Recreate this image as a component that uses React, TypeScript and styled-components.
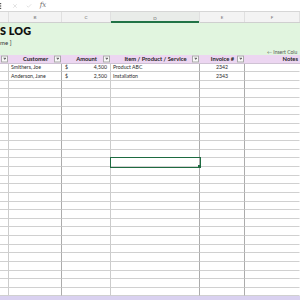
import React from 'react';
import styled, { createGlobalStyle } from 'styled-components';
import { X, Check } from 'lucide-react';

const GlobalStyle = createGlobalStyle`
  html, body {
    margin: 0;
    padding: 0;
    background: #fff;
  }
  body {
    width: 300px;
    height: 300px;
    overflow: hidden;
    font-family: Lato, "Liberation Sans", sans-serif;
  }
`;

const COLS = '9px 53px 49px 89px 45px 55px';
const LINE_SOFT = '#cccccc';
const LINE_STRONG = '#acacac';
const columnLines = [LINE_SOFT, LINE_STRONG, LINE_SOFT, LINE_STRONG, LINE_STRONG, 'transparent'];

const Sheet = styled.div`
  width: 300px;
  height: 300px;
  display: flex;
  flex-direction: column;
  overflow: hidden;
  background: #fff;
`;

const FormulaBar = styled.div`
  height: 12px;
  flex: none;
  box-sizing: border-box;
  display: flex;
  align-items: center;
  border-bottom: 1px solid #d6d6d6;
  background: #fff;
`;

const NameBoxEdge = styled.span`
  width: 8px;
  height: 100%;
  display: flex;
  align-items: center;
`;

const ToolSlot = styled.span`
  width: 14px;
  display: flex;
  align-items: center;
  justify-content: center;
  color: #b9b9b9;
`;

const Fx = styled.span`
  font-family: "DejaVu Serif", "Liberation Serif", serif;
  font-style: italic;
  font-size: 7px;
  color: #6d6d6d;
  line-height: 1;
`;

const ColumnHeaderRow = styled.div`
  height: 11px;
  flex: none;
  display: grid;
  grid-template-columns: ${COLS};
  background: #f3f3f3;
  border-bottom: 1px solid #cfcfcf;
  box-sizing: border-box;
`;

const ColumnLetter = styled.div<{ $active?: boolean }>`
  display: flex;
  align-items: center;
  justify-content: center;
  font-size: 4.6px;
  color: #707070;
  border-right: 1px solid #e0e0e0;
  background: ${(p) => (p.$active ? '#e9ece9' : 'transparent')};
  box-shadow: ${(p) => (p.$active ? 'inset 0 -2px 0 #217346' : 'none')};
  margin-bottom: ${(p) => (p.$active ? '-1px' : '0')};
`;

const TitleBand = styled.div`
  height: 32px;
  flex: none;
  display: flex;
  flex-direction: column;
  padding-top: 2px;
  box-sizing: border-box;
  background: #e1f5df;
  overflow: hidden;
  white-space: nowrap;
`;

const Title = styled.div`
  font-size: 10.8px;
  line-height: 12px;
  font-weight: 800;
  color: #111;
  letter-spacing: 0.1px;
`;

const Subtitle = styled.div`
  margin-top: 2px;
  font-size: 6px;
  line-height: 7px;
  color: #333;
`;

const Note = styled.div`
  margin-top: auto;
  padding-left: 267px;
  font-size: 5px;
  line-height: 6px;
  color: #555;
`;

const HeaderRow = styled.div`
  height: 8.6px;
  flex: none;
  display: grid;
  grid-template-columns: ${COLS};
  background: #ecd6f1;
  border-bottom: 1px solid #cfc2d4;
  box-sizing: border-box;
`;

const HeaderCell = styled.div<{ $align: 'center' | 'right' }>`
  position: relative;
  display: flex;
  align-items: center;
  justify-content: ${(p) => (p.$align === 'right' ? 'flex-end' : 'center')};
  padding-right: ${(p) => (p.$align === 'right' ? '2px' : '0')};
  font-size: 5.8px;
  font-weight: 700;
  color: #1d1d1d;
  white-space: nowrap;
  overflow: visible;
`;

const AmountHeader = styled(HeaderCell)`
  padding-right: 14px;
`;

const FilterButton = styled.span`
  position: absolute;
  right: 1px;
  top: 50%;
  transform: translateY(-50%);
  width: 7px;
  height: 7px;
  box-sizing: border-box;
  border: 1px solid #a9a9a9;
  background: #f8f8f8;
  display: flex;
  align-items: center;
  justify-content: center;
`;

const Body = styled.div`
  flex: none;
  display: flex;
  flex-direction: column;
`;

const Row = styled.div`
  height: 8.64px;
  display: grid;
  grid-template-columns: ${COLS};
`;

const Cell = styled.div<{ $line: string; $selected?: boolean }>`
  position: relative;
  display: flex;
  align-items: center;
  box-sizing: border-box;
  border-bottom: 1px solid #d0d0d0;
  border-right: 1px solid ${(p) => p.$line};
  font-size: 5.2px;
  color: #2a2a2a;
  white-space: nowrap;
  padding: 0 2px;
  z-index: ${(p) => (p.$selected ? 1 : 0)};
  box-shadow: ${(p) => (p.$selected ? '0 0 0 1px #1e6b41' : 'none')};

  &::after {
    content: '';
    display: ${(p) => (p.$selected ? 'block' : 'none')};
    position: absolute;
    right: -2px;
    bottom: -2px;
    width: 3px;
    height: 3px;
    background: #1e6b41;
  }
`;

const AmountCell = styled(Cell)`
  justify-content: space-between;
  padding: 0 3px 0 3px;
`;

const CenterCell = styled(Cell)`
  justify-content: center;
`;

const BottomStrip = styled.div`
  flex: 1;
  background: #d9d1f0;
`;

type Entry = { customer: string; amount: string; item: string; invoice: string };

const entries: Entry[] = [
  { customer: 'Smithers, Joe', amount: '4,500', item: 'Product ABC', invoice: '2342' },
  { customer: 'Anderson, Jane', amount: '2,500', item: 'Installation', invoice: '2343' },
];

const ROW_COUNT = 27;
const SELECTED_ROW = 11;

const Caret = () => (
  <svg width="3.5" height="2.5" viewBox="0 0 6 4">
    <path d="M0 0h6L3 4z" fill="#6a6a6a" />
  </svg>
);

const Filter = () => (
  <FilterButton>
    <Caret />
  </FilterButton>
);

const App: React.FC = () => {
  const rows = Array.from({ length: ROW_COUNT }, (_, i) => entries[i]);

  return (
    <>
      <GlobalStyle />
      <Sheet>
        <FormulaBar>
          <NameBoxEdge>
            <svg width="2" height="6" viewBox="0 0 2 6">
              <rect x="0" y="0" width="1.2" height="1.2" fill="#555" />
              <rect x="0" y="2.4" width="1.2" height="1.2" fill="#555" />
              <rect x="0" y="4.8" width="1.2" height="1.2" fill="#555" />
            </svg>
          </NameBoxEdge>
          <ToolSlot>
            <X size={6} strokeWidth={1.6} />
          </ToolSlot>
          <ToolSlot>
            <Check size={6} strokeWidth={1.6} />
          </ToolSlot>
          <ToolSlot>
            <Fx>fx</Fx>
          </ToolSlot>
        </FormulaBar>

        <ColumnHeaderRow>
          <ColumnLetter />
          <ColumnLetter>B</ColumnLetter>
          <ColumnLetter>C</ColumnLetter>
          <ColumnLetter $active>D</ColumnLetter>
          <ColumnLetter>E</ColumnLetter>
          <ColumnLetter>F</ColumnLetter>
        </ColumnHeaderRow>

        <TitleBand>
          <Title>S LOG</Title>
          <Subtitle>me ]</Subtitle>
          <Note>← Insert Colu</Note>
        </TitleBand>

        <HeaderRow>
          <HeaderCell $align="center">
            <Filter />
          </HeaderCell>
          <HeaderCell $align="center">
            Customer
            <Filter />
          </HeaderCell>
          <AmountHeader $align="right">
            Amount
            <Filter />
          </AmountHeader>
          <HeaderCell $align="center">
            Item / Product / Service
            <Filter />
          </HeaderCell>
          <HeaderCell $align="center">
            Invoice #
            <Filter />
          </HeaderCell>
          <HeaderCell $align="right">Notes</HeaderCell>
        </HeaderRow>

        <Body>
          {rows.map((entry, i) => (
            <Row key={i}>
              <Cell $line={columnLines[0]} />
              <Cell $line={columnLines[1]}>{entry?.customer}</Cell>
              <AmountCell $line={columnLines[2]}>
                {entry && (
                  <>
                    <span>$</span>
                    <span>{entry.amount}</span>
                  </>
                )}
              </AmountCell>
              <Cell $line={columnLines[3]} $selected={i === SELECTED_ROW}>
                {entry?.item}
              </Cell>
              <CenterCell $line={columnLines[4]}>{entry?.invoice}</CenterCell>
              <Cell $line={columnLines[5]} />
            </Row>
          ))}
        </Body>

        <BottomStrip />
      </Sheet>
    </>
  );
};

export default App;
